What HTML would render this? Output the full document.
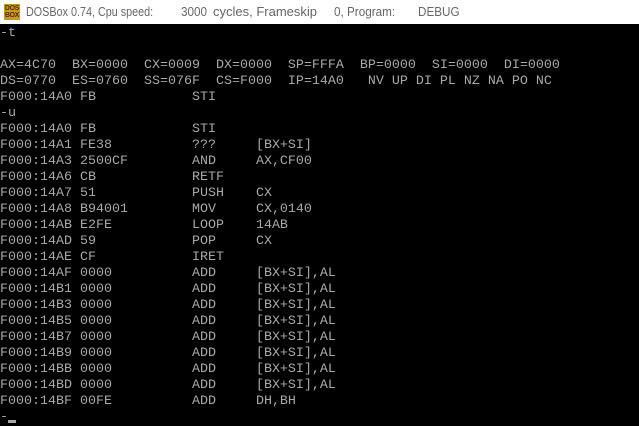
<!DOCTYPE html>
<html><head><meta charset="utf-8"><style>
html,body{margin:0;padding:0;width:639px;height:424px;overflow:hidden;background:#000}
#tb{position:absolute;left:0;top:0;width:639px;height:24px;background:#fff}
#ic{position:absolute;left:4px;top:4px;width:16px;height:16px;background:#c89a1c;font:bold 7px/7px "Liberation Sans",sans-serif;color:#5a2a00;text-align:center;padding-top:1px;box-sizing:border-box;letter-spacing:-0.3px}
.t{position:absolute;top:4px;font:13px/15px "Liberation Sans",sans-serif;color:#666;white-space:pre;transform:scaleX(0.9);transform-origin:0 0}
#scr{position:absolute;left:0;top:26px;margin:0;font:13.33px/16px "Liberation Mono",monospace;color:#a8a8a8;white-space:pre}
#cur{position:absolute;left:8px;top:420px;width:8px;height:3px;background:#a8a8a8}
</style></head><body>
<div id="tb"><div id="ic">DOS<br>BOX</div>
<span class="t" style="left:26px;transform:scaleX(0.83)">DOSBox 0.74, Cpu speed:</span>
<span class="t" style="left:181px">3000</span>
<span class="t" style="left:213px;transform:none">cycles, Frameskip</span>
<span class="t" style="left:334px">0, Program:</span>
<span class="t" style="left:418px">DEBUG</span></div>
<pre id="scr">-t

AX=4C70  BX=0000  CX=0009  DX=0000  SP=FFFA  BP=0000  SI=0000  DI=0000
DS=0770  ES=0760  SS=076F  CS=F000  IP=14A0   NV UP DI PL NZ NA PO NC
F000:14A0 FB            STI
-u
F000:14A0 FB            STI
F000:14A1 FE38          ???     [BX+SI]
F000:14A3 2500CF        AND     AX,CF00
F000:14A6 CB            RETF
F000:14A7 51            PUSH    CX
F000:14A8 B94001        MOV     CX,0140
F000:14AB E2FE          LOOP    14AB
F000:14AD 59            POP     CX
F000:14AE CF            IRET
F000:14AF 0000          ADD     [BX+SI],AL
F000:14B1 0000          ADD     [BX+SI],AL
F000:14B3 0000          ADD     [BX+SI],AL
F000:14B5 0000          ADD     [BX+SI],AL
F000:14B7 0000          ADD     [BX+SI],AL
F000:14B9 0000          ADD     [BX+SI],AL
F000:14BB 0000          ADD     [BX+SI],AL
F000:14BD 0000          ADD     [BX+SI],AL
F000:14BF 00FE          ADD     DH,BH
-</pre>
<div id="cur"></div>
</body></html>
